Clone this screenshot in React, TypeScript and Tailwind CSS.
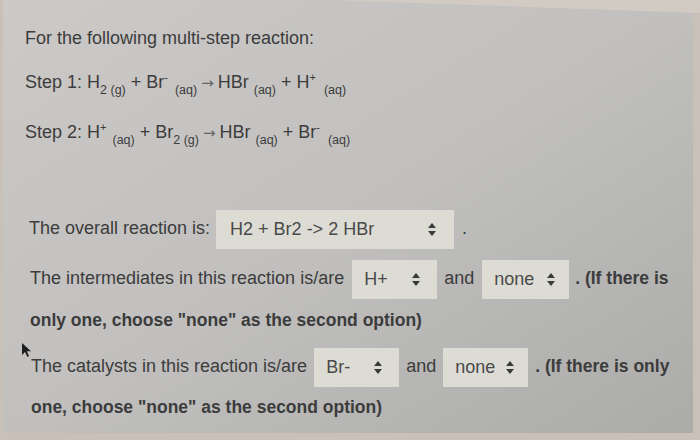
import React from "react";

const Arrows = () => (
    <svg width="8" height="13" viewBox="0 0 8 13" className="inline-block">
        <path d="M4 0 L8 5 L0 5 Z" fill="#3a3a3a" />
        <path d="M0 8 L8 8 L4 13 Z" fill="#3a3a3a" />
    </svg>
);

function Select({ value, width, pad = "pl-[13px]", arrowRight = "pr-[17px]" }: { value: string; width: string; pad?: string; arrowRight?: string }) {
    return (
        <span
            className={`inline-flex h-[39px] items-center justify-between align-middle bg-[#dcdcd4] text-[#4a4a4a] ${width} ${pad} ${arrowRight}`}
        >
            <span>{value}</span>
            <Arrows />
        </span>
    );
}

const Sub = ({ children, className = "" }: { children: React.ReactNode; className?: string }) => (
    <span className={`relative top-[6px] text-[12.5px] ${className}`}>{children}</span>
);

const Sup = ({ children }: { children: React.ReactNode }) => (
    <span className="relative -top-[7px] text-[11px]">{children}</span>
);

const Arrow = () => <span className="mx-[4px] text-[15px] leading-[0] text-[#666] font-['DejaVu_Sans',sans-serif]">→</span>;

export default function App() {
    return (
        <div className="relative w-[700px] h-[440px] overflow-hidden bg-[#c9c1b7] font-['Liberation_Sans',Arial,sans-serif]">
            <div className="w-[690px] h-[433px] ml-[3px] bg-gradient-to-br from-[#ccc9c7] via-[#c1c0be] to-[#ababaa] text-[18px] text-[#3c3c3c] pl-[22px] pt-[27px]">
                <p className="leading-[22px]">For the following multi-step reaction:</p>

                <p className="mt-[22px] leading-[22px]">
                    Step 1: H<Sub>2 (g)</Sub> + Br<Sup>-</Sup>
                    <Sub className="ml-[7px]">(aq)</Sub>
                    <Arrow />HBr <Sub>(aq)</Sub> + H<Sup>+</Sup>
                    <Sub className="ml-[8px]">(aq)</Sub>
                </p>

                <p className="mt-[26px] leading-[22px]">
                    Step 2: H<Sup>+</Sup>
                    <Sub className="ml-[6px]">(aq)</Sub> + Br<Sub>2 (g)</Sub>
                    <Arrow />HBr <Sub>(aq)</Sub> + Br<Sup>-</Sup>
                    <Sub className="ml-[8px]">(aq)</Sub>
                </p>

                <div className="mt-[63px] pl-[4px] leading-[40px]">
                    <span>The overall reaction is:</span>
                    <span className="ml-[6px]">
                        <Select value="H2 + Br2 -> 2 HBr" width="w-[238px]" pad="pl-[14px]" arrowRight="pr-[18px]" />
                    </span>
                    <span className="ml-[8px]">.</span>
                </div>

                <div className="mt-[8px] pl-[5px] leading-[42px]">
                    The intermediates in this reaction is/are
                    <span className="ml-[8px]">
                        <Select value="H+" width="w-[85px]" pad="pl-[12px]" />
                    </span>
                    <span className="ml-[7px]">and</span>
                    <span className="ml-[8px]">
                        <Select value="none" width="w-[87px]" pad="pl-[12px]" arrowRight="pr-[14px]" />
                    </span>
                    <span className="ml-[6px] font-bold text-[17.5px]">. (If there is</span>
                    <br />
                    <span className="font-bold text-[17.5px]">only one, choose "none" as the second option)</span>
                </div>

                <div className="mt-[5px] pl-[6px] leading-[40px]">
                    The catalysts in this reaction is/are
                    <span className="ml-[7px]">
                        <Select value="Br-" width="w-[85px]" pad="pl-[12px]" />
                    </span>
                    <span className="ml-[7px]">and</span>
                    <span className="ml-[7px]">
                        <Select value="none" width="w-[85px]" pad="pl-[12px]" arrowRight="pr-[14px]" />
                    </span>
                    <span className="ml-[7px] font-bold text-[17.5px]">. (If there is only</span>
                    <br />
                    <span className="font-bold text-[17.5px]">one, choose "none" as the second option)</span>
                </div>
            </div>

            {/* paper edge showing at the top right of the photo */}
            <svg className="absolute top-0 left-0" width="700" height="14" viewBox="0 0 700 14">
                <polygon points="330,0 700,0 700,13" fill="#d2cbc3" />
            </svg>

            {/* mouse cursor */}
            <svg className="absolute left-[21px] top-[342px]" width="12" height="16" viewBox="0 0 12 16">
                <path d="M1 1 L1 13 L4 10 L6.5 15 L8 14 L5.8 9.3 L10 9.3 Z" fill="#1e1e1e" />
            </svg>
        </div>
    );
}
